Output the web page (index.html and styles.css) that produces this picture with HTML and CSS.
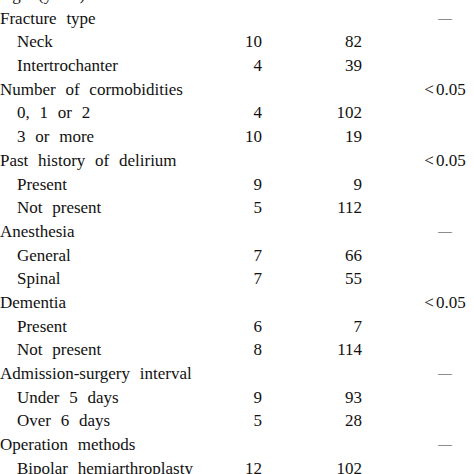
FILE: index.html
```html
<!DOCTYPE html>
<html>
<head>
<meta charset="utf-8">
<link rel="stylesheet" href="styles.css">
</head>
<body>
<div class="table">
  <div class="row"><div class="lbl">Age (years) ≥ 75</div><div class="n1">11</div><div class="n2">44</div><div class="p">0.01</div></div>
  <div class="row"><div class="lbl">Fracture type</div><div class="n1"></div><div class="n2"></div><div class="p"><span class="dash">—</span></div></div>
  <div class="row"><div class="lbl sub">Neck</div><div class="n1">10</div><div class="n2">82</div><div class="p"></div></div>
  <div class="row"><div class="lbl sub">Intertrochanter</div><div class="n1">4</div><div class="n2">39</div><div class="p"></div></div>
  <div class="row"><div class="lbl">Number of cormobidities</div><div class="n1"></div><div class="n2"></div><div class="p"><span class="lt">&lt;</span>0.05</div></div>
  <div class="row"><div class="lbl sub">0, 1 or 2</div><div class="n1">4</div><div class="n2">102</div><div class="p"></div></div>
  <div class="row"><div class="lbl sub">3 or more</div><div class="n1">10</div><div class="n2">19</div><div class="p"></div></div>
  <div class="row"><div class="lbl">Past history of delirium</div><div class="n1"></div><div class="n2"></div><div class="p"><span class="lt">&lt;</span>0.05</div></div>
  <div class="row"><div class="lbl sub">Present</div><div class="n1">9</div><div class="n2">9</div><div class="p"></div></div>
  <div class="row"><div class="lbl sub">Not present</div><div class="n1">5</div><div class="n2">112</div><div class="p"></div></div>
  <div class="row"><div class="lbl">Anesthesia</div><div class="n1"></div><div class="n2"></div><div class="p"><span class="dash">—</span></div></div>
  <div class="row"><div class="lbl sub">General</div><div class="n1">7</div><div class="n2">66</div><div class="p"></div></div>
  <div class="row"><div class="lbl sub">Spinal</div><div class="n1">7</div><div class="n2">55</div><div class="p"></div></div>
  <div class="row"><div class="lbl">Dementia</div><div class="n1"></div><div class="n2"></div><div class="p"><span class="lt">&lt;</span>0.05</div></div>
  <div class="row"><div class="lbl sub">Present</div><div class="n1">6</div><div class="n2">7</div><div class="p"></div></div>
  <div class="row"><div class="lbl sub">Not present</div><div class="n1">8</div><div class="n2">114</div><div class="p"></div></div>
  <div class="row"><div class="lbl">Admission-surgery interval</div><div class="n1"></div><div class="n2"></div><div class="p"><span class="dash">—</span></div></div>
  <div class="row"><div class="lbl sub">Under 5 days</div><div class="n1">9</div><div class="n2">93</div><div class="p"></div></div>
  <div class="row"><div class="lbl sub">Over 6 days</div><div class="n1">5</div><div class="n2">28</div><div class="p"></div></div>
  <div class="row"><div class="lbl">Operation methods</div><div class="n1"></div><div class="n2"></div><div class="p"><span class="dash">—</span></div></div>
  <div class="row"><div class="lbl sub">Bipolar hemiarthroplasty</div><div class="n1">12</div><div class="n2">102</div><div class="p"></div></div>
</div>
</body>
</html>
```

FILE: styles.css
```css
html, body {
  margin: 0;
  padding: 0;
  background: #ffffff;
  overflow: hidden;
}
body {
  width: 474px;
  height: 474px;
  font-family: "Liberation Serif", "Times New Roman", serif;
  font-size: 17px;
  color: #111111;
}
.table {
  display: flex;
  flex-direction: column;
  margin-top: -17px;
}
.row {
  display: grid;
  grid-template-columns: 212px 50px 100px 54px 58px;
  height: 23.7px;
  line-height: 23.7px;
  white-space: nowrap;
}
.lbl {
  padding-left: 0;
  word-spacing: 5.5px;
}
.lbl.sub {
  padding-left: 17px;
}
.n1, .n2 {
  text-align: right;
}
.p {
  grid-column: 5;
  text-align: center;
  margin-left: -58px;
  width: 116px;
  padding-left: 58px;
  box-sizing: border-box;
}
.lt {
  margin-right: 2px;
}
.dash {
  font-size: 14px;
  vertical-align: 4px;
  color: #333333;
}
```
